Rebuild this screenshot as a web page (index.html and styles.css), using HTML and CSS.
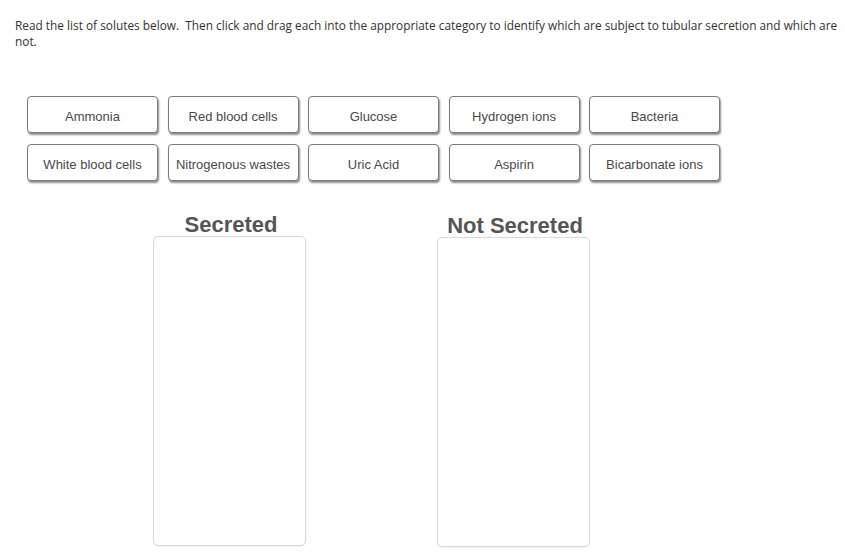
FILE: index.html
```html
<!DOCTYPE html>
<html>
<head>
<meta charset="utf-8">
<link rel="stylesheet" href="styles.css">
</head>
<body>
<p class="intro">Read the list of solutes below.&nbsp; Then click and drag each into the appropriate category to identify which are subject to tubular secretion and which are not.</p>
<div class="choices">
  <div class="chip">Ammonia</div>
  <div class="chip">Red blood cells</div>
  <div class="chip">Glucose</div>
  <div class="chip">Hydrogen ions</div>
  <div class="chip">Bacteria</div>
  <div class="chip">White blood cells</div>
  <div class="chip">Nitrogenous wastes</div>
  <div class="chip">Uric Acid</div>
  <div class="chip">Aspirin</div>
  <div class="chip">Bicarbonate ions</div>
</div>
<div class="targets">
  <div class="target">
    <h2 class="target-title">Secreted</h2>
    <div class="drop"></div>
  </div>
  <div class="target second">
    <h2 class="target-title">Not Secreted</h2>
    <div class="drop"></div>
  </div>
</div>
</body>
</html>
```
FILE: styles.css
```css
html, body {
  margin: 0;
  padding: 0;
  background: #fff;
}
body {
  width: 845px;
  height: 554px;
  overflow: hidden;
}
.intro {
  margin: 0;
  width: 824px;
  padding: 17px 0 0 15px;
  font-family: "Open Sans", Lato, sans-serif;
  font-size: 11.85px;
  line-height: 16px;
  color: #333;
}
.choices {
  display: grid;
  grid-template-columns: repeat(5, 131px);
  grid-auto-rows: 37px;
  column-gap: 9.5px;
  row-gap: 11px;
  padding: 0 0 0 27px;
  margin-top: 47px;
}
.chip {
  box-sizing: border-box;
  padding-top: 3px;
  border: 1px solid #7a7a7a;
  border-radius: 4px;
  box-shadow: 1px 2px 2px rgba(0, 0, 0, 0.45);
  background: #fff;
  display: flex;
  align-items: center;
  justify-content: center;
  font-family: "Liberation Sans", Arial, sans-serif;
  font-size: 13px;
  color: #4a4a4a;
  white-space: nowrap;
}
.targets {
  display: flex;
  padding-left: 153px;
  gap: 131px;
  margin-top: 32px;
}
.target {
  width: 153px;
  display: flex;
  flex-direction: column;
}
.target.second {
  margin-top: 1px;
}
.target-title {
  margin: 0 0 0 3px;
  font-family: "Liberation Sans", Arial, sans-serif;
  font-weight: bold;
  font-size: 22px;
  line-height: 23px;
  color: #555;
  text-align: center;
  white-space: nowrap;
}
.drop {
  box-sizing: border-box;
  height: 310px;
  border: 1px solid #d8d8d8;
  border-radius: 5px;
  box-shadow: 0 1px 1px rgba(0, 0, 0, 0.06);
}
```
